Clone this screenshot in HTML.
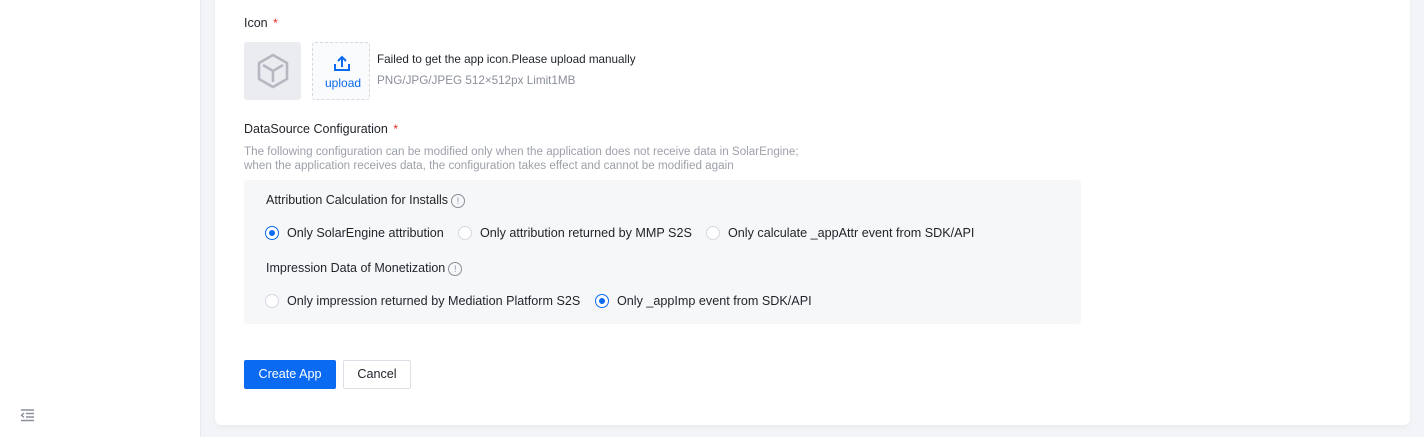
<!DOCTYPE html>
<html><head><meta charset="utf-8"><style>
*{margin:0;padding:0;box-sizing:border-box}
body{width:1424px;height:437px;overflow:hidden;background:#f3f4f7;font-family:"Liberation Sans",sans-serif;font-size:12px;color:#1f2329;position:relative}
.abs{position:absolute;white-space:nowrap}
#side{left:0;top:0;width:201px;height:437px;background:#fff;border-right:1px solid #e8e9ee}
#card{left:215px;top:-10px;width:1195px;height:435px;background:#fff;border-radius:0 0 6px 6px;box-shadow:0 2px 4px rgba(0,0,0,.04)}
.req{color:#e8271e;font-size:12px;margin-left:2px}
.radio{display:inline-block;width:14px;height:14px;border:1px solid #d5d8de;border-radius:50%;background:#fff;vertical-align:-3px;margin-right:8px;position:relative}
.radio.on{border-color:#0a6af2}
.radio.on:after{content:"";position:absolute;left:3px;top:3px;width:6px;height:6px;border-radius:50%;background:#0a6af2}
.opt{font-size:12.6px;color:#1f2329}
.h{font-size:12.5px}
.info{display:inline-block;width:14px;height:14px;border:1px solid #8a8f99;border-radius:50%;font-size:9px;line-height:12px;text-align:center;color:#8a8f99;vertical-align:0px;margin-left:3px}
</style></head><body>
<div class="abs" id="side"></div>
<svg class="abs" style="left:20px;top:408px" width="15" height="14" viewBox="0 0 15 14"><g stroke="#8a8f99" stroke-width="1.4" fill="none"><path d="M1 2h13M6 5.5h8M6 9h8M1 12.5h13"/><path d="M4 5L1.5 7.2 4 9.4"/></g></svg>
<div class="abs" id="card"></div>

<div class="abs h" style="left:244px;top:16px">Icon <span class="req">*</span></div>
<div class="abs" style="left:244px;top:42px;width:57px;height:58px;background:#ebecf0;border-radius:3px"></div>
<svg class="abs" style="left:254px;top:52px" width="38" height="38" viewBox="0 0 38 38"><g stroke="#b5b8c0" stroke-width="2.6" fill="none" stroke-linejoin="round"><path d="M19 3L33 11V27L19 35L5 27V11Z"/><path d="M9 13L19 19L29 13M19 19V30"/></g></svg>
<div class="abs" style="left:312px;top:42px;width:58px;height:58px;border:1px dashed #d5d8de;border-radius:3px;background:#fafbfc"></div>
<svg class="abs" style="left:333px;top:55px" width="18" height="17" viewBox="0 0 18 17"><g stroke="#0a6af2" stroke-width="2" fill="none"><path d="M2 9V15H16V9"/><path d="M9 12V2M5 6L9 2L13 6"/></g></svg>
<div class="abs" style="left:325px;top:76px;color:#0a6af2">upload</div>
<div class="abs" style="left:377px;top:53px;font-size:11.7px">Failed to get the app icon.Please upload manually</div>
<div class="abs" style="left:377px;top:74px;color:#8a8f99;font-size:11.7px">PNG/JPG/JPEG 512×512px Limit1MB</div>

<div class="abs h" style="left:244px;top:122px">DataSource Configuration <span class="req">*</span></div>
<div class="abs" style="left:244px;top:145px;color:#9da1a9;line-height:14px;font-size:11.65px">The following configuration can be modified only when the application does not receive data in SolarEngine;<br>when the application receives data, the configuration takes effect and cannot be modified again</div>

<div class="abs" style="left:244px;top:180px;width:837px;height:144px;background:#f6f7f9;border-radius:3px"></div>
<div class="abs h" style="left:266px;top:193px">Attribution Calculation for Installs<span class="info">!</span></div>
<div class="abs opt" style="left:265px;top:226px"><span class="radio on"></span>Only SolarEngine attribution</div>
<div class="abs opt" style="left:458px;top:226px"><span class="radio"></span>Only attribution returned by MMP S2S</div>
<div class="abs opt" style="left:706px;top:226px"><span class="radio"></span>Only calculate _appAttr event from SDK/API</div>
<div class="abs h" style="left:266px;top:261px">Impression Data of Monetization<span class="info">!</span></div>
<div class="abs opt" style="left:265px;top:294px"><span class="radio"></span>Only impression returned by Mediation Platform S2S</div>
<div class="abs opt" style="left:595px;top:294px"><span class="radio on"></span>Only _appImp event from SDK/API</div>

<div class="abs" style="left:244px;top:360px;width:92px;height:29px;background:#0a6af2;border-radius:2px;color:#fff;text-align:center;line-height:29px;font-size:12.6px">Create App</div>
<div class="abs" style="left:343px;top:360px;width:68px;height:29px;border:1px solid #dcdfe6;border-radius:2px;background:#fff;text-align:center;line-height:27px;font-size:12.6px">Cancel</div>
</body></html>
